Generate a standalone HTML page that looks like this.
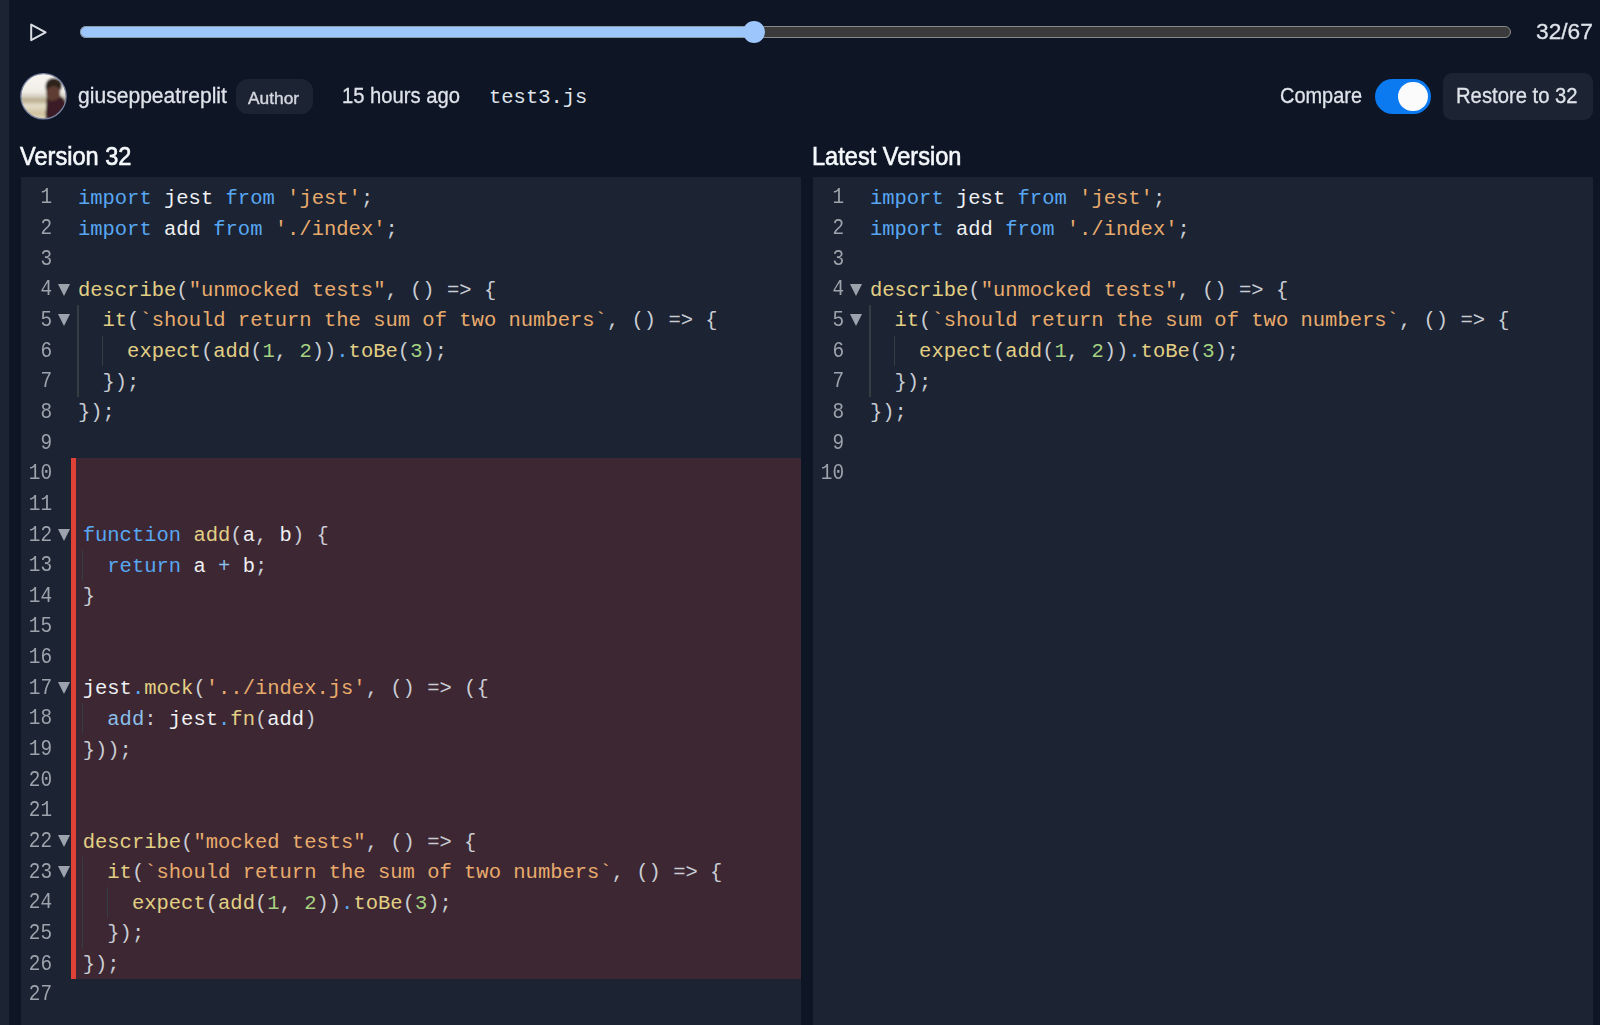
<!DOCTYPE html>
<html><head><meta charset="utf-8"><style>
html,body{margin:0;padding:0}
body{width:1600px;height:1025px;overflow:hidden;background:#0e1525;position:relative;font-family:"Liberation Sans",sans-serif;color:#f5f9fc}
div,span{box-sizing:border-box}
.abs{position:absolute}
.strip{position:absolute;left:0;top:0;width:8.5px;height:1025px;background:#1c2333}
.panel{position:absolute;top:177px;height:848px;width:780px;background:#1c2333}
.red{position:absolute;background:#3d2733;border-left:5px solid #df4137}
.ln{position:absolute;width:31px;text-align:right;transform:scaleX(0.86);transform-origin:right center;font-family:"Liberation Mono",monospace;font-size:22.5px;line-height:30.65px;height:30.65px;color:#9da3ab;white-space:pre}
.code{position:absolute;font-family:"Liberation Mono",monospace;font-size:20.5px;line-height:30.65px;height:30.65px;white-space:pre;color:#c9cdd3}
.fold{position:absolute;width:0;height:0;border-left:6.2px solid transparent;border-right:6.2px solid transparent;border-top:12.3px solid #9ca3ad}
.guide{position:absolute;width:1.3px;background:#343d41}
.txt{position:absolute;white-space:nowrap;line-height:1;transform-origin:0 0}
</style></head><body>
<div class="strip"></div>
<svg class="abs" style="left:0;top:0" width="80" height="60"><path d="M31.2 24.6 L31.2 40.2 L45.6 32.4 Z" fill="none" stroke="#d9dde3" stroke-width="2" stroke-linejoin="round"/></svg>
<div class="abs" style="left:80px;top:26.3px;width:1431px;height:11.8px;border-radius:6px;background:#3b3b3b;border:1.2px solid #8a8a8a"></div>
<div class="abs" style="left:80px;top:26.3px;width:680px;height:11.8px;border-radius:6px 0 0 6px;background:#9cc6fc;border:1.2px solid #8a9aaa;border-right:none"></div>
<div class="abs" style="left:742.5px;top:21px;width:22px;height:22px;border-radius:50%;background:#9cc6fc"></div>
<div class="txt" style="-webkit-text-stroke:0.3px #dfe3ea;left:1536px;top:21px;font-size:22.5px;transform:scaleX(1.01);color:#dfe3ea">32/67</div>
<svg class="abs" style="left:19px;top:72px" width="50" height="50" viewBox="0 0 50 50">
<defs><clipPath id="cp"><circle cx="24.5" cy="24.3" r="22.6"/></clipPath>
<filter id="bl" x="-10%" y="-10%" width="120%" height="120%"><feGaussianBlur stdDeviation="0.9"/></filter>
<linearGradient id="sky" x1="0" y1="0" x2="0" y2="1"><stop offset="0" stop-color="#fbf8f3"/><stop offset="0.4" stop-color="#f1ede6"/><stop offset="0.48" stop-color="#d9d4c8"/><stop offset="0.56" stop-color="#b8ab8c"/><stop offset="0.66" stop-color="#e6dfcb"/><stop offset="0.8" stop-color="#cfc29f"/><stop offset="1" stop-color="#efe8d8"/></linearGradient></defs>
<g clip-path="url(#cp)"><g filter="url(#bl)">
<rect x="-2" y="-2" width="54" height="54" fill="url(#sky)"/>
<path d="M27 50 Q26 40 27.5 32 Q27 27 28 24 L40 23 Q45 26 47 30 L49 50 Z" fill="#3a1f25"/>
<path d="M27.5 24 Q26.5 18 29 15 Q35 13 40 15 Q42 20 40.5 26 Q35 30 30 28.5 Z" fill="#5f3d33"/>
<path d="M26.5 14 Q27 7 33.5 6 Q40 6 42.5 10 Q43.5 15 41.5 18.5 Q38 13.5 33 14.5 Q29 15.5 27 19 Z" fill="#2e211c"/>
</g></g>
<circle cx="24.5" cy="24.3" r="22.6" fill="none" stroke="#7c85a3" stroke-width="1.3"/>
</svg>
<div class="txt" style="-webkit-text-stroke:0.3px #dfe3ea;left:78px;top:84.7px;font-size:22.5px;transform:scaleX(0.937);color:#dfe3ea">giuseppeatreplit</div>
<div class="abs" style="left:236px;top:79px;width:77px;height:35px;border-radius:12px;background:#1c2333"></div>
<div class="txt" style="left:247.8px;top:89.5px;font-size:16.5px;transform:scaleX(1.05);-webkit-text-stroke:0.4px #d2d6de;color:#d2d6de">Author</div>
<div class="txt" style="-webkit-text-stroke:0.3px #dfe3ea;left:342px;top:84.7px;font-size:22.5px;transform:scaleX(0.898);color:#dfe3ea">15 hours ago</div>
<div class="txt" style="left:489px;top:88px;font-size:20.5px;font-family:'Liberation Mono',monospace;color:#dfe3ea">test3.js</div>
<div class="txt" style="-webkit-text-stroke:0.3px #dfe3ea;left:1280px;top:84.7px;font-size:22.5px;transform:scaleX(0.886);color:#dfe3ea">Compare</div>
<div class="abs" style="left:1375px;top:79px;width:56px;height:35px;border-radius:18px;background:#0b79f0"></div>
<div class="abs" style="left:1398.3px;top:81.9px;width:29.6px;height:29.6px;border-radius:50%;background:#fbfbfc"></div>
<div class="abs" style="left:1442.5px;top:73px;width:150px;height:46.5px;border-radius:9px;background:#1c2333"></div>
<div class="txt" style="-webkit-text-stroke:0.3px #dfe3ea;left:1456px;top:84.75px;font-size:22.5px;transform:scaleX(0.90);color:#dfe3ea">Restore to 32</div>
<div class="txt" style="left:20px;top:143.6px;font-size:25.5px;transform:scaleX(0.925);-webkit-text-stroke:0.6px #f5f9fc;color:#f5f9fc">Version 32</div>
<div class="txt" style="left:812px;top:143.5px;font-size:25.5px;transform:scaleX(0.925);-webkit-text-stroke:0.6px #f5f9fc;color:#f5f9fc">Latest Version</div>
<div class="panel" style="left:21px"></div>
<div class="panel" style="left:813px"></div>
<div class="red" style="left:71.00px;top:458.20px;width:730.00px;height:521.05px"></div>
<div class="ln" style="top:182.35px;left:21px">1</div>
<div class="code" style="top:183.85px;left:77.90px"><span style="color:#58a7f2">import</span><span style="color:#c9cdd3"> </span><span style="color:#eef0f2">jest</span><span style="color:#c9cdd3"> </span><span style="color:#58a7f2">from</span><span style="color:#c9cdd3"> </span><span style="color:#e8ab6c">&#x27;jest&#x27;</span><span style="color:#c9cdd3">;</span></div>
<div class="ln" style="top:213.00px;left:21px">2</div>
<div class="code" style="top:214.50px;left:77.90px"><span style="color:#58a7f2">import</span><span style="color:#c9cdd3"> </span><span style="color:#eef0f2">add</span><span style="color:#c9cdd3"> </span><span style="color:#58a7f2">from</span><span style="color:#c9cdd3"> </span><span style="color:#e8ab6c">&#x27;./index&#x27;</span><span style="color:#c9cdd3">;</span></div>
<div class="ln" style="top:243.65px;left:21px">3</div>
<div class="ln" style="top:274.30px;left:21px">4</div>
<div class="fold" style="top:283.70px;left:57.80px"></div>
<div class="code" style="top:275.80px;left:77.90px"><span style="color:#e2cf84">describe</span><span style="color:#c9cdd3">(</span><span style="color:#e8ab6c">&quot;unmocked tests&quot;</span><span style="color:#c9cdd3">, () =&gt; {</span></div>
<div class="ln" style="top:304.95px;left:21px">5</div>
<div class="fold" style="top:314.35px;left:57.80px"></div>
<div class="code" style="top:306.45px;left:77.90px"><span style="color:#c9cdd3">  </span><span style="color:#e2cf84">it</span><span style="color:#c9cdd3">(</span><span style="color:#e8ab6c">`should return the sum of two numbers`</span><span style="color:#c9cdd3">, () =&gt; {</span></div>
<div class="ln" style="top:335.60px;left:21px">6</div>
<div class="code" style="top:337.10px;left:77.90px"><span style="color:#c9cdd3">    </span><span style="color:#e2cf84">expect</span><span style="color:#c9cdd3">(</span><span style="color:#e2cf84">add</span><span style="color:#c9cdd3">(</span><span style="color:#a6d281">1</span><span style="color:#c9cdd3">, </span><span style="color:#a6d281">2</span><span style="color:#c9cdd3">))</span><span style="color:#58a7f2">.</span><span style="color:#e2cf84">toBe</span><span style="color:#c9cdd3">(</span><span style="color:#a6d281">3</span><span style="color:#c9cdd3">);</span></div>
<div class="ln" style="top:366.25px;left:21px">7</div>
<div class="code" style="top:367.75px;left:77.90px"><span style="color:#c9cdd3">  });</span></div>
<div class="ln" style="top:396.90px;left:21px">8</div>
<div class="code" style="top:398.40px;left:77.90px"><span style="color:#c9cdd3">});</span></div>
<div class="ln" style="top:427.55px;left:21px">9</div>
<div class="ln" style="top:458.20px;left:21px">10</div>
<div class="ln" style="top:488.85px;left:21px">11</div>
<div class="ln" style="top:519.50px;left:21px">12</div>
<div class="fold" style="top:528.90px;left:57.80px"></div>
<div class="code" style="top:521.00px;left:82.70px"><span style="color:#58a7f2">function</span><span style="color:#c9cdd3"> </span><span style="color:#e2cf84">add</span><span style="color:#c9cdd3">(</span><span style="color:#eef0f2">a</span><span style="color:#c9cdd3">, </span><span style="color:#eef0f2">b</span><span style="color:#c9cdd3">) {</span></div>
<div class="ln" style="top:550.15px;left:21px">13</div>
<div class="code" style="top:551.65px;left:82.70px"><span style="color:#c9cdd3">  </span><span style="color:#58a7f2">return</span><span style="color:#c9cdd3"> </span><span style="color:#eef0f2">a</span><span style="color:#c9cdd3"> </span><span style="color:#8cbfe8">+</span><span style="color:#c9cdd3"> </span><span style="color:#eef0f2">b</span><span style="color:#c9cdd3">;</span></div>
<div class="ln" style="top:580.80px;left:21px">14</div>
<div class="code" style="top:582.30px;left:82.70px"><span style="color:#c9cdd3">}</span></div>
<div class="ln" style="top:611.45px;left:21px">15</div>
<div class="ln" style="top:642.10px;left:21px">16</div>
<div class="ln" style="top:672.75px;left:21px">17</div>
<div class="fold" style="top:682.15px;left:57.80px"></div>
<div class="code" style="top:674.25px;left:82.70px"><span style="color:#eef0f2">jest</span><span style="color:#58a7f2">.</span><span style="color:#e2cf84">mock</span><span style="color:#c9cdd3">(</span><span style="color:#e8ab6c">&#x27;../index.js&#x27;</span><span style="color:#c9cdd3">, () =&gt; ({</span></div>
<div class="ln" style="top:703.40px;left:21px">18</div>
<div class="code" style="top:704.90px;left:82.70px"><span style="color:#c9cdd3">  </span><span style="color:#8cbfe8">add</span><span style="color:#c9cdd3">: </span><span style="color:#eef0f2">jest</span><span style="color:#58a7f2">.</span><span style="color:#e2cf84">fn</span><span style="color:#c9cdd3">(</span><span style="color:#eef0f2">add</span><span style="color:#c9cdd3">)</span></div>
<div class="ln" style="top:734.05px;left:21px">19</div>
<div class="code" style="top:735.55px;left:82.70px"><span style="color:#c9cdd3">}));</span></div>
<div class="ln" style="top:764.70px;left:21px">20</div>
<div class="ln" style="top:795.35px;left:21px">21</div>
<div class="ln" style="top:826.00px;left:21px">22</div>
<div class="fold" style="top:835.40px;left:57.80px"></div>
<div class="code" style="top:827.50px;left:82.70px"><span style="color:#e2cf84">describe</span><span style="color:#c9cdd3">(</span><span style="color:#e8ab6c">&quot;mocked tests&quot;</span><span style="color:#c9cdd3">, () =&gt; {</span></div>
<div class="ln" style="top:856.65px;left:21px">23</div>
<div class="fold" style="top:866.05px;left:57.80px"></div>
<div class="code" style="top:858.15px;left:82.70px"><span style="color:#c9cdd3">  </span><span style="color:#e2cf84">it</span><span style="color:#c9cdd3">(</span><span style="color:#e8ab6c">`should return the sum of two numbers`</span><span style="color:#c9cdd3">, () =&gt; {</span></div>
<div class="ln" style="top:887.30px;left:21px">24</div>
<div class="code" style="top:888.80px;left:82.70px"><span style="color:#c9cdd3">    </span><span style="color:#e2cf84">expect</span><span style="color:#c9cdd3">(</span><span style="color:#e2cf84">add</span><span style="color:#c9cdd3">(</span><span style="color:#a6d281">1</span><span style="color:#c9cdd3">, </span><span style="color:#a6d281">2</span><span style="color:#c9cdd3">))</span><span style="color:#58a7f2">.</span><span style="color:#e2cf84">toBe</span><span style="color:#c9cdd3">(</span><span style="color:#a6d281">3</span><span style="color:#c9cdd3">);</span></div>
<div class="ln" style="top:917.95px;left:21px">25</div>
<div class="code" style="top:919.45px;left:82.70px"><span style="color:#c9cdd3">  });</span></div>
<div class="ln" style="top:948.60px;left:21px">26</div>
<div class="code" style="top:950.10px;left:82.70px"><span style="color:#c9cdd3">});</span></div>
<div class="ln" style="top:979.25px;left:21px">27</div>
<div class="guide" style="top:304.95px;left:77.30px;height:30.65px"></div>
<div class="guide" style="top:335.60px;left:77.30px;height:30.65px"></div>
<div class="guide" style="top:366.25px;left:77.30px;height:30.65px"></div>
<div class="guide" style="top:335.60px;left:101.92px;height:30.65px"></div>
<div class="guide" style="top:550.15px;left:82.10px;height:30.65px"></div>
<div class="guide" style="top:703.40px;left:82.10px;height:30.65px"></div>
<div class="guide" style="top:856.65px;left:82.10px;height:30.65px"></div>
<div class="guide" style="top:887.30px;left:82.10px;height:30.65px"></div>
<div class="guide" style="top:917.95px;left:82.10px;height:30.65px"></div>
<div class="guide" style="top:887.30px;left:106.72px;height:30.65px"></div>
<div class="ln" style="top:182.35px;left:813px">1</div>
<div class="code" style="top:183.85px;left:869.90px"><span style="color:#58a7f2">import</span><span style="color:#c9cdd3"> </span><span style="color:#eef0f2">jest</span><span style="color:#c9cdd3"> </span><span style="color:#58a7f2">from</span><span style="color:#c9cdd3"> </span><span style="color:#e8ab6c">&#x27;jest&#x27;</span><span style="color:#c9cdd3">;</span></div>
<div class="ln" style="top:213.00px;left:813px">2</div>
<div class="code" style="top:214.50px;left:869.90px"><span style="color:#58a7f2">import</span><span style="color:#c9cdd3"> </span><span style="color:#eef0f2">add</span><span style="color:#c9cdd3"> </span><span style="color:#58a7f2">from</span><span style="color:#c9cdd3"> </span><span style="color:#e8ab6c">&#x27;./index&#x27;</span><span style="color:#c9cdd3">;</span></div>
<div class="ln" style="top:243.65px;left:813px">3</div>
<div class="ln" style="top:274.30px;left:813px">4</div>
<div class="fold" style="top:283.70px;left:849.80px"></div>
<div class="code" style="top:275.80px;left:869.90px"><span style="color:#e2cf84">describe</span><span style="color:#c9cdd3">(</span><span style="color:#e8ab6c">&quot;unmocked tests&quot;</span><span style="color:#c9cdd3">, () =&gt; {</span></div>
<div class="ln" style="top:304.95px;left:813px">5</div>
<div class="fold" style="top:314.35px;left:849.80px"></div>
<div class="code" style="top:306.45px;left:869.90px"><span style="color:#c9cdd3">  </span><span style="color:#e2cf84">it</span><span style="color:#c9cdd3">(</span><span style="color:#e8ab6c">`should return the sum of two numbers`</span><span style="color:#c9cdd3">, () =&gt; {</span></div>
<div class="ln" style="top:335.60px;left:813px">6</div>
<div class="code" style="top:337.10px;left:869.90px"><span style="color:#c9cdd3">    </span><span style="color:#e2cf84">expect</span><span style="color:#c9cdd3">(</span><span style="color:#e2cf84">add</span><span style="color:#c9cdd3">(</span><span style="color:#a6d281">1</span><span style="color:#c9cdd3">, </span><span style="color:#a6d281">2</span><span style="color:#c9cdd3">))</span><span style="color:#58a7f2">.</span><span style="color:#e2cf84">toBe</span><span style="color:#c9cdd3">(</span><span style="color:#a6d281">3</span><span style="color:#c9cdd3">);</span></div>
<div class="ln" style="top:366.25px;left:813px">7</div>
<div class="code" style="top:367.75px;left:869.90px"><span style="color:#c9cdd3">  });</span></div>
<div class="ln" style="top:396.90px;left:813px">8</div>
<div class="code" style="top:398.40px;left:869.90px"><span style="color:#c9cdd3">});</span></div>
<div class="ln" style="top:427.55px;left:813px">9</div>
<div class="ln" style="top:458.20px;left:813px">10</div>
<div class="guide" style="top:304.95px;left:869.30px;height:30.65px"></div>
<div class="guide" style="top:335.60px;left:869.30px;height:30.65px"></div>
<div class="guide" style="top:366.25px;left:869.30px;height:30.65px"></div>
<div class="guide" style="top:335.60px;left:893.92px;height:30.65px"></div>
</body></html>
